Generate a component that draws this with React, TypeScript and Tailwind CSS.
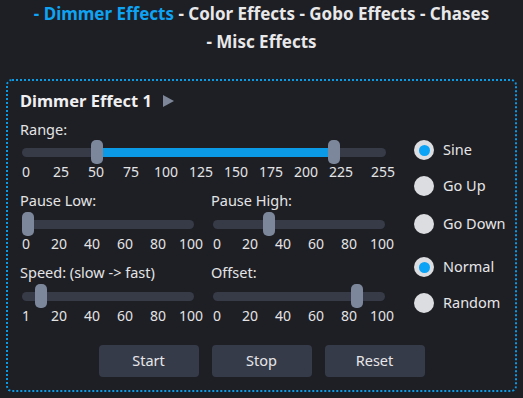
import React from 'react'

const FONT = { fontFamily: '"Noto Sans", "Open Sans", sans-serif' }

interface SliderProps {
  width: number
  ticks: { label: string; at: number }[]
  handles: number[]
  fill?: boolean
}

// handles and tick positions are fractions 0..1 along the track
function Slider({ width, ticks, handles, fill }: SliderProps) {
  const handlePos = (f: number) => 6 + (width - 12) * f
  return (
    <div className="ml-[2px]" style={{ width }}>
      <div className="relative h-6">
        <div className="absolute left-0 right-0 top-[8px] h-[9px] rounded-full bg-[#373b48]" />
        {fill && handles.length === 2 && (
          <div
            className="absolute top-[8px] h-[9px] bg-[#0a9ae6]"
            style={{ left: handlePos(handles[0]), width: handlePos(handles[1]) - handlePos(handles[0]) }}
          />
        )}
        {handles.map((h, i) => (
          <div
            key={i}
            className="absolute top-0 h-6 w-3 -translate-x-1/2 rounded-[5px] bg-[#7c879b]"
            style={{ left: handlePos(h) }}
          />
        ))}
      </div>
      <div className="relative h-4 text-[14px] leading-4 text-[#e4e4e6]">
        {ticks.map((t) => (
          <span
            key={t.label}
            className="absolute top-0 -translate-x-1/2 whitespace-nowrap"
            style={{ left: 4 + (width - 7) * t.at }}
          >
            {t.label}
          </span>
        ))}
      </div>
    </div>
  )
}

function Radio({ label, checked, className }: { label: string; checked?: boolean; className?: string }) {
  return (
    <div className={`flex h-5 items-center gap-[9px] ${className ?? ''}`}>
      <div className="flex h-5 w-5 shrink-0 items-center justify-center rounded-full bg-[#dcdde1]">
        {checked && <div className="h-[11px] w-[11px] rounded-full bg-[#0ba3f5]" />}
      </div>
      <span className="whitespace-nowrap text-[14.5px] text-[#e6e6e8]">{label}</span>
    </div>
  )
}

const rangeTicks = [0, 25, 50, 75, 100, 125, 150, 175, 200, 225, 255].map((v) => ({
  label: String(v),
  at: v / 255,
}))
const pctTicks = [0, 20, 40, 60, 80, 100].map((v) => ({ label: String(v), at: v / 100 }))
const speedTicks = [1, 20, 40, 60, 80, 100].map((v, i) => ({ label: String(v), at: (i * 20) / 100 }))

function Label({ children }: { children: React.ReactNode }) {
  return <div className="h-5 text-[14.5px] leading-5 text-[#e4e4e6]">{children}</div>
}

export default function App() {
  const tabs = ['Color Effects', 'Gobo Effects', 'Chases', 'Misc Effects']
  return (
    <div className="h-[398px] w-full overflow-hidden bg-[#1e1f24]" style={FONT}>
      {/* Tabs */}
      <div className="px-8 text-center text-[17px] font-bold leading-[28px] text-[#e8e8ea]">
        <span className="text-[#0ea3f3]">- Dimmer Effects</span>
        {tabs.map((t) => (
          <span key={t}> - {t}</span>
        ))}
      </div>

      {/* Effect panel */}
      <div className="mx-[6px] mt-[23px] h-[313px] rounded-[6px] border-2 border-dotted border-[#0b9be6] px-3 pt-2">
        <div className="flex h-6 items-center gap-[10px] text-[16.5px] font-bold text-[#f0f0f2]">
          Dimmer Effect 1
          <svg width="13" height="14" viewBox="0 0 13 14">
            <path d="M1 1 L12 7 L1 13 Z" fill="#7d8799" />
          </svg>
        </div>

        <div className="flex">
          <div className="w-[374px] shrink-0">
            <div className="mt-[5px] h-[22px] text-[14.5px] leading-[22px] text-[#e4e4e6]">Range:</div>
            <Slider width={364} ticks={rangeTicks} handles={[50 / 255, 222 / 255]} fill />

            <div className="mt-[10px] grid grid-cols-2 gap-2">
              <div>
                <Label>Pause Low:</Label>
                <div className="mt-[2px]">
                  <Slider width={172} ticks={pctTicks} handles={[0]} />
                </div>
                <div className="mt-[10px]">
                  <Label>Speed: (slow -&gt; fast)</Label>
                </div>
                <div className="mt-[2px]">
                  <Slider width={172} ticks={speedTicks} handles={[0.08]} />
                </div>
              </div>
              <div>
                <Label>Pause High:</Label>
                <div className="mt-[2px]">
                  <Slider width={172} ticks={pctTicks} handles={[0.31]} />
                </div>
                <div className="mt-[10px]">
                  <Label>Offset:</Label>
                </div>
                <div className="mt-[2px]">
                  <Slider width={172} ticks={pctTicks} handles={[0.86]} />
                </div>
              </div>
            </div>
          </div>

          <div className="ml-5 pt-[27px]">
            <Radio label="Sine" checked />
            <Radio label="Go Up" className="mt-4" />
            <Radio label="Go Down" className="mt-[18px]" />
            <Radio label="Normal" checked className="mt-[23px]" />
            <Radio label="Random" className="mt-4" />
          </div>
        </div>

        <div className="mt-[21px] flex justify-center gap-[13px]">
          {['Start', 'Stop', 'Reset'].map((b) => (
            <button
              key={b}
              className="h-8 w-[100px] rounded-[4px] bg-[#363b4a] text-[14.5px] text-[#e6e6e8]"
            >
              {b}
            </button>
          ))}
        </div>
      </div>
    </div>
  )
}
